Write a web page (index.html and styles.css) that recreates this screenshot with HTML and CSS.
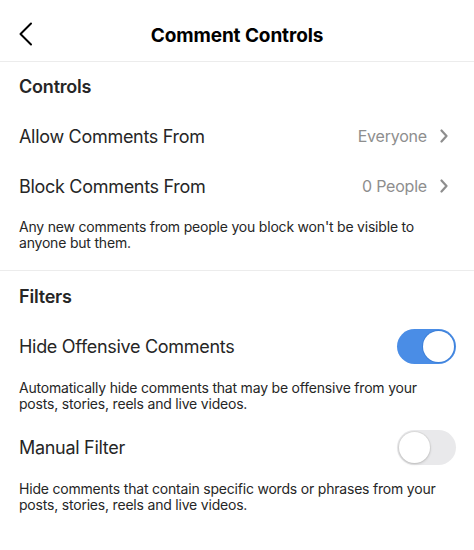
FILE: index.html
```html
<!DOCTYPE html>
<html lang="en">
<head>
<meta charset="utf-8">
<title>Comment Controls</title>
<link rel="stylesheet" href="styles.css">
</head>
<body>
<div class="screen">
  <header class="header">
    <span class="back" aria-label="Back">
      <svg width="16" height="24" viewBox="0 0 16 24"><path d="M13 1.5 L2.5 12 L13 22.5" fill="none" stroke="#000" stroke-width="2" stroke-linecap="round" stroke-linejoin="round"/></svg>
    </span>
    <h1 class="title">Comment Controls</h1>
  </header>

  <section class="section first">
    <h2 class="section-title">Controls</h2>
    <div class="row">
      <span class="label">Allow Comments From</span>
      <span class="value">Everyone
        <svg class="chev" width="10" height="14" viewBox="0 0 10 14"><path d="M2.5 1.5 L7.5 7 L2.5 12.5" fill="none" stroke="#8e8e8e" stroke-width="2.2" stroke-linecap="round" stroke-linejoin="round"/></svg>
      </span>
    </div>
    <div class="row">
      <span class="label">Block Comments From</span>
      <span class="value">0 People
        <svg class="chev" width="10" height="14" viewBox="0 0 10 14"><path d="M2.5 1.5 L7.5 7 L2.5 12.5" fill="none" stroke="#8e8e8e" stroke-width="2.2" stroke-linecap="round" stroke-linejoin="round"/></svg>
      </span>
    </div>
    <p class="desc">Any new comments from people you block won't be visible to anyone but them.</p>
  </section>

  <section class="section">
    <h2 class="section-title">Filters</h2>
    <div class="row first-toggle">
      <span class="label">Hide Offensive Comments</span>
      <span class="toggle on"><span class="knob"></span></span>
    </div>
    <p class="desc">Automatically hide comments that may be offensive from your posts, stories, reels and live videos.</p>
    <div class="row second">
      <span class="label">Manual Filter</span>
      <span class="toggle off"><span class="knob"></span></span>
    </div>
    <p class="desc">Hide comments that contain specific words or phrases from your posts, stories, reels and live videos.</p>
  </section>
</div>
</body>
</html>
```

FILE: styles.css
```css
* { box-sizing: border-box; }
html, body { margin: 0; padding: 0; background: #fff; }
body {
  font-family: "Inter", "Liberation Sans", Arial, sans-serif;
  color: #262626;
  width: 474px;
  height: 550px;
  overflow: hidden;
}
.screen { display: flex; flex-direction: column; }

.header {
  height: 62px;
  border-bottom: 1px solid #ececec;
  display: flex;
  align-items: center;
  justify-content: center;
  position: relative;
}
.back {
  position: absolute;
  left: 18px;
  top: 22px;
  width: 16px;
  height: 24px;
  display: block;
}
.back svg { display: block; }
.title {
  margin: 0;
  font-size: 19px;
  font-weight: 700;
  color: #000;
  letter-spacing: -0.1px;
  padding-top: 10px;
}

.section { padding: 0 18px 0 19px; }
.section.first { border-bottom: 1px solid #ececec; padding-bottom: 19px; }

.section-title {
  margin: 0;
  height: 49px;
  display: flex;
  align-items: center;
  font-size: 18px;
  font-weight: 600;
  color: #262626;
  letter-spacing: -0.2px;
}
.section.first + .section .section-title { height: 50px; }
.row {
  height: 50px;
  display: flex;
  align-items: center;
  justify-content: space-between;
}
.row.first-toggle { height: 51px; }
.row.second { margin-top: 9px; height: 52px; }
.label { font-size: 18px; font-weight: 400; color: #262626; letter-spacing: -0.3px; }
.value {
  display: flex;
  align-items: center;
  gap: 12px;
  font-size: 16px;
  color: #8e8e8e;
  letter-spacing: -0.2px;
  padding-right: 7px;
}
.chev { display: block; }

.desc {
  margin: 8px 0 0;
  font-size: 14px;
  line-height: 16px;
  color: #262626;
  letter-spacing: -0.2px;
}

.toggle {
  width: 59px;
  height: 35px;
  border-radius: 18px;
  display: flex;
  align-items: center;
  padding: 2px;
}
.toggle.on { background: #4a8de6; justify-content: flex-end; }
.toggle.off { background: #e9e9eb; justify-content: flex-start; }
.knob {
  width: 31px;
  height: 31px;
  border-radius: 50%;
  background: #fff;
}
.toggle.on .knob { box-shadow: 0 0 0 1px #3b7fd8; }
.toggle.off .knob { box-shadow: 0 1px 3px rgba(0,0,0,0.18), 0 0 0 1px #e0e0e0; }
```
